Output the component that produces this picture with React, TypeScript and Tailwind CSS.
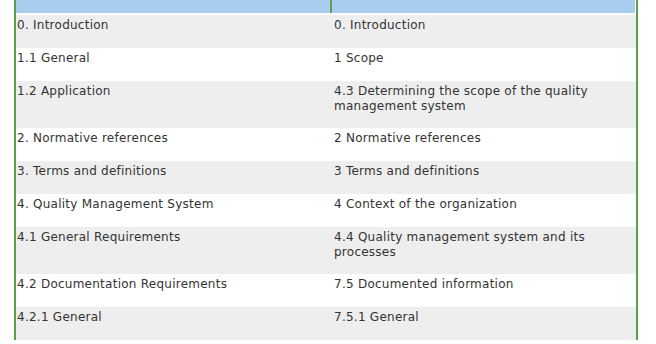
const ROWS: { left: string[]; right: string[]; tall?: boolean }[] = [
  { left: ['0. Introduction'], right: ['0. Introduction'] },
  { left: ['1.1 General'], right: ['1 Scope'] },
  {
    left: ['1.2 Application'],
    right: ['4.3 Determining the scope of the quality', 'management system'],
    tall: true,
  },
  { left: ['2. Normative references'], right: ['2 Normative references'] },
  { left: ['3. Terms and definitions'], right: ['3 Terms and definitions'] },
  { left: ['4. Quality Management System'], right: ['4 Context of the organization'] },
  {
    left: ['4.1 General Requirements'],
    right: ['4.4 Quality management system and its', 'processes'],
    tall: true,
  },
  { left: ['4.2 Documentation Requirements'], right: ['7.5 Documented information'] },
  { left: ['4.2.1 General'], right: ['7.5.1 General'] },
]

function Lines({ lines }: { lines: string[] }) {
  return (
    <>
      {lines.map((l) => (
        <div key={l} className="whitespace-nowrap">
          {l}
        </div>
      ))}
    </>
  )
}

export default function App() {
  return (
    <div
      className="h-[344px] w-[656px] overflow-hidden bg-white text-[12px] leading-[15px] tracking-[0.25px] text-[#333]"
      style={{ fontFamily: '"DejaVu Sans", Verdana, sans-serif' }}
    >
      <div className="ml-[14px] w-[624px] border-x-2 border-[#5e9f4c]">
        <div className="flex h-[13px] overflow-hidden bg-[#a9cdee] font-bold text-[#d4e6f7]">
          <div className="w-[314px] pr-[12px] text-center">
            <div className="-mt-[11px]">ISO 9001:2008</div>
          </div>
          <div className="w-[2px] bg-[#5e9f4c]" />
          <div className="flex-1 pr-[8px] text-center">
            <div className="-mt-[11px]">ISO 9001:2015</div>
          </div>
          <div className="w-px bg-white" />
        </div>
        <div className="h-[2px] bg-white" />
        {ROWS.map((r, i) => (
          <div
            key={i}
            className={`flex pr-[2px] ${r.tall ? 'h-[47px]' : 'h-[33px]'} ${
              i % 2 === 0 ? 'bg-[#eeeeee]' : 'bg-white'
            }`}
          >
            <div className="w-[314px] pl-px pt-[3px]">
              <Lines lines={r.left} />
            </div>
            <div className="flex-1 pl-[4px] pt-[3px]">
              <Lines lines={r.right} />
            </div>
          </div>
        ))}
      </div>
    </div>
  )
}
